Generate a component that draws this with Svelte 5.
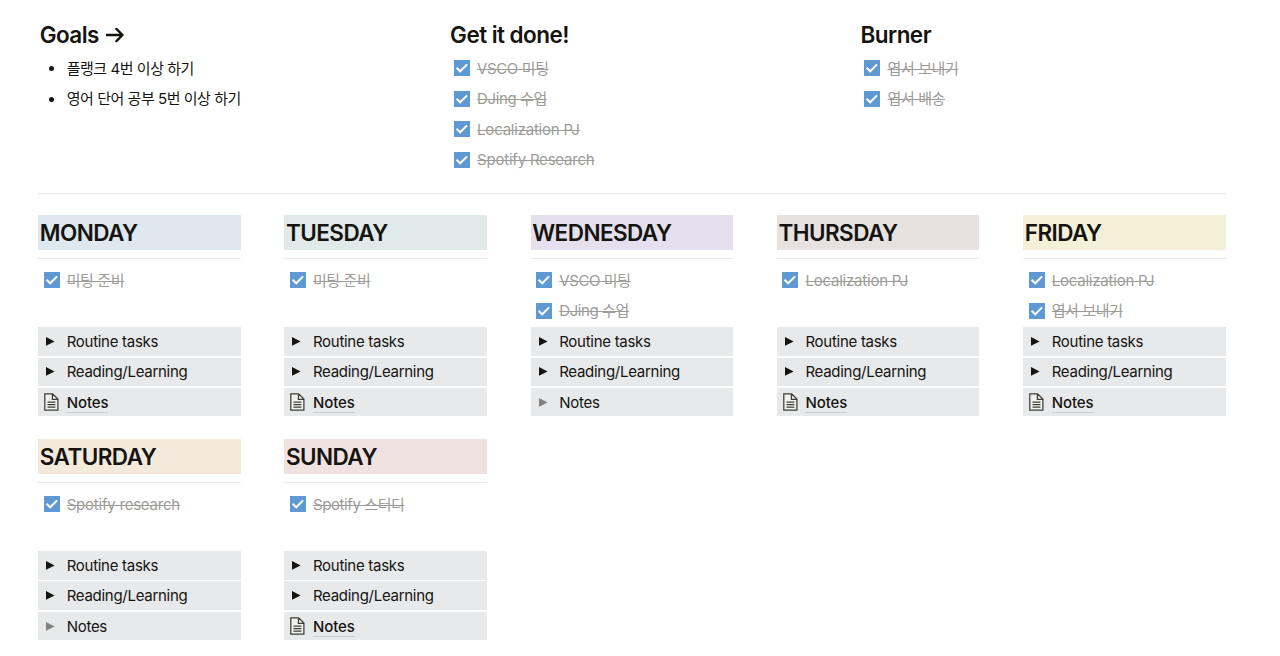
<script lang="ts">
  type Day = {
    name: string;
    color: string;
    todos: string[];
    notesPage: boolean;
  };

  const goals = ['플랭크 4번 이상 하기', '영어 단어 공부 5번 이상 하기'];

  const lists = [
    { title: 'Get it done!', todos: ['VSCO 미팅', 'DJing 수업', 'Localization PJ', 'Spotify Research'] },
    { title: 'Burner', todos: ['엽서 보내기', '엽서 배송'] }
  ];

  const days: Day[] = [
    { name: 'MONDAY', color: 'blue', todos: ['미팅 준비'], notesPage: true },
    { name: 'TUESDAY', color: 'teal', todos: ['미팅 준비'], notesPage: true },
    { name: 'WEDNESDAY', color: 'purple', todos: ['VSCO 미팅', 'DJing 수업'], notesPage: false },
    { name: 'THURSDAY', color: 'brown', todos: ['Localization PJ'], notesPage: true },
    { name: 'FRIDAY', color: 'yellow', todos: ['Localization PJ', '엽서 보내기'], notesPage: true },
    { name: 'SATURDAY', color: 'orange', todos: ['Spotify research'], notesPage: false },
    { name: 'SUNDAY', color: 'pink', todos: ['Spotify 스터디'], notesPage: true }
  ];

  // Hangul is set a little tighter than Latin text
  const isKorean = (text: string) => /[가-힣]/.test(text);
</script>

{#snippet todo(text: string)}
  <li class="row todo">
    <span class="icon">
      <svg class="check" viewBox="0 0 16 16" aria-hidden="true">
        <rect width="16" height="16" fill="#5f99d4" />
        <path d="M2.6 7.7 6.2 11.3 13.1 4.4" fill="none" stroke="#fff" stroke-width="2" />
      </svg>
    </span>
    <span class="label" class:korean={isKorean(text)}><s>{text}</s></span>
  </li>
{/snippet}

{#snippet toggle(text: string, empty: boolean)}
  <div class="row block" class:empty>
    <span class="icon">
      <svg class="arrow" viewBox="0 0 9 9" aria-hidden="true">
        <path d="M0 0 8.6 4.4 0 8.8Z" fill="currentColor" />
      </svg>
    </span>
    <span class="label">{text}</span>
  </div>
{/snippet}

<main class="planner">
  <div class="top">
    <section>
      <h2>
        Goals
        <svg class="goto" viewBox="0 0 18 16" aria-hidden="true">
          <path d="M0.9 8H16.2M10.4 1.9 16.5 8 10.4 14.1" fill="none" stroke="currentColor" stroke-width="2.4" stroke-linecap="round" stroke-linejoin="round" />
        </svg>
      </h2>
      <ul>
        {#each goals as goal}
          <li class="row goal">
            <span class="icon"><span class="dot"></span></span>
            <span class="label korean">{goal}</span>
          </li>
        {/each}
      </ul>
    </section>
    {#each lists as list}
      <section>
        <h2>{list.title}</h2>
        <ul>
          {#each list.todos as text}
            {@render todo(text)}
          {/each}
        </ul>
      </section>
    {/each}
  </div>

  <hr class="divider" />

  <div class="week">
    {#each days as day}
      <section>
        <h2 class="day {day.color}">{day.name}</h2>
        <hr />
        <ul class="todos">
          {#each day.todos as text}
            {@render todo(text)}
          {/each}
        </ul>
        {@render toggle('Routine tasks', false)}
        {@render toggle('Reading/Learning', false)}
        {#if day.notesPage}
          <div class="row block">
            <span class="icon">
              <svg class="page" viewBox="0 0 15 18" aria-hidden="true">
                <path d="M0.8 0.8H8.6L13.9 6.1V17.2H0.8Z" fill="#f1f1ef" />
                <path d="M0.8 0.8H8.6L13.9 6.1V17.2H0.8ZM8.4 0.8V6.3H13.9M3.5 9H11.4M3.5 11.6H11.4M3.5 14.2H11.4" fill="none" stroke="#3d3c38" stroke-width="1.25" />
              </svg>
            </span>
            <span class="label"><a class="notes">Notes</a></span>
          </div>
        {:else}
          {@render toggle('Notes', true)}
        {/if}
      </section>
    {/each}
  </div>
</main>

<style>
  :global(body) {
    background: #fff;
  }

  .planner {
    box-sizing: border-box;
    width: 1280px;
    height: 656px;
    padding: 18.8px 54.4px 0 38px;
    overflow: hidden;
    color: #151410;
    font-family: Inter, 'Noto Sans CJK KR', sans-serif;
    font-size: 15px;
  }

  ul {
    margin: 0;
    padding: 0;
    list-style: none;
  }

  h2 {
    display: flex;
    align-items: center;
    gap: 7px;
    margin: 0;
    padding: 0 1.7px;
    height: 31px;
    font-size: 22.5px;
    font-weight: 600;
    line-height: 31px;
    letter-spacing: -0.55px;
    white-space: nowrap;
  }

  hr {
    height: 1px;
    margin: 0;
    border: 0;
    background: #e8e8e7;
  }

  .top {
    display: grid;
    grid-template-columns: repeat(3, 1fr);
    column-gap: 43.7px;
    height: 174px;
  }

  .top ul {
    margin-top: 3.9px;
  }

  .goto {
    width: 18px;
    height: 16px;
    margin-top: 1px;
  }

  .week {
    display: grid;
    grid-template-columns: repeat(5, 1fr);
    column-gap: 43.7px;
    row-gap: 22.4px;
    margin-top: 21.2px;
  }

  .day {
    height: 35px;
    line-height: 35px;
    margin-bottom: 8.3px;
  }

  .blue { background: #dfe7ef; }
  .teal { background: #e0eae8; }
  .purple { background: #e5e0ee; }
  .brown { background: #e7e2df; }
  .yellow { background: #f5f0d8; }
  .orange { background: #f4eadc; }
  .pink { background: #f1e2e2; }

  .todos {
    min-height: 60.8px;
    margin: 6.4px 0 0.7px;
  }

  .row {
    display: flex;
    align-items: center;
    height: 30.4px;
    line-height: 22px;
    white-space: nowrap;
  }

  .icon {
    display: flex;
    justify-content: center;
    width: 27px;
    flex: none;
  }

  .label {
    padding-left: 1.7px;
    letter-spacing: -0.22px;
  }

  .korean {
    letter-spacing: -0.46px;
  }

  .todo .korean {
    letter-spacing: -0.4px;
  }

  .dot {
    width: 5px;
    height: 5px;
    border-radius: 50%;
    background: currentColor;
  }

  .todo {
    color: #9d9c99;
  }

  .check {
    width: 16px;
    height: 16px;
    margin-bottom: 1px;
  }

  s {
    text-decoration-thickness: 1px;
  }

  .block {
    height: 28.5px;
    margin-bottom: 1.9px;
    background: #e8e9eb;
  }

  .block:last-child {
    margin-bottom: 0;
  }

  .block .label {
    padding-top: 1.2px;
    letter-spacing: -0.28px;
  }

  .arrow {
    width: 9px;
    height: 9px;
    margin-right: 2px;
  }

  .empty .arrow {
    color: #82827f;
  }

  .page {
    width: 15px;
    height: 18px;
  }

  .block .notes {
    display: inline-block;
    border-bottom: 1px solid #cccdcd;
    font-weight: 500;
    letter-spacing: -0.1px;
    line-height: 19px;
  }
</style>
